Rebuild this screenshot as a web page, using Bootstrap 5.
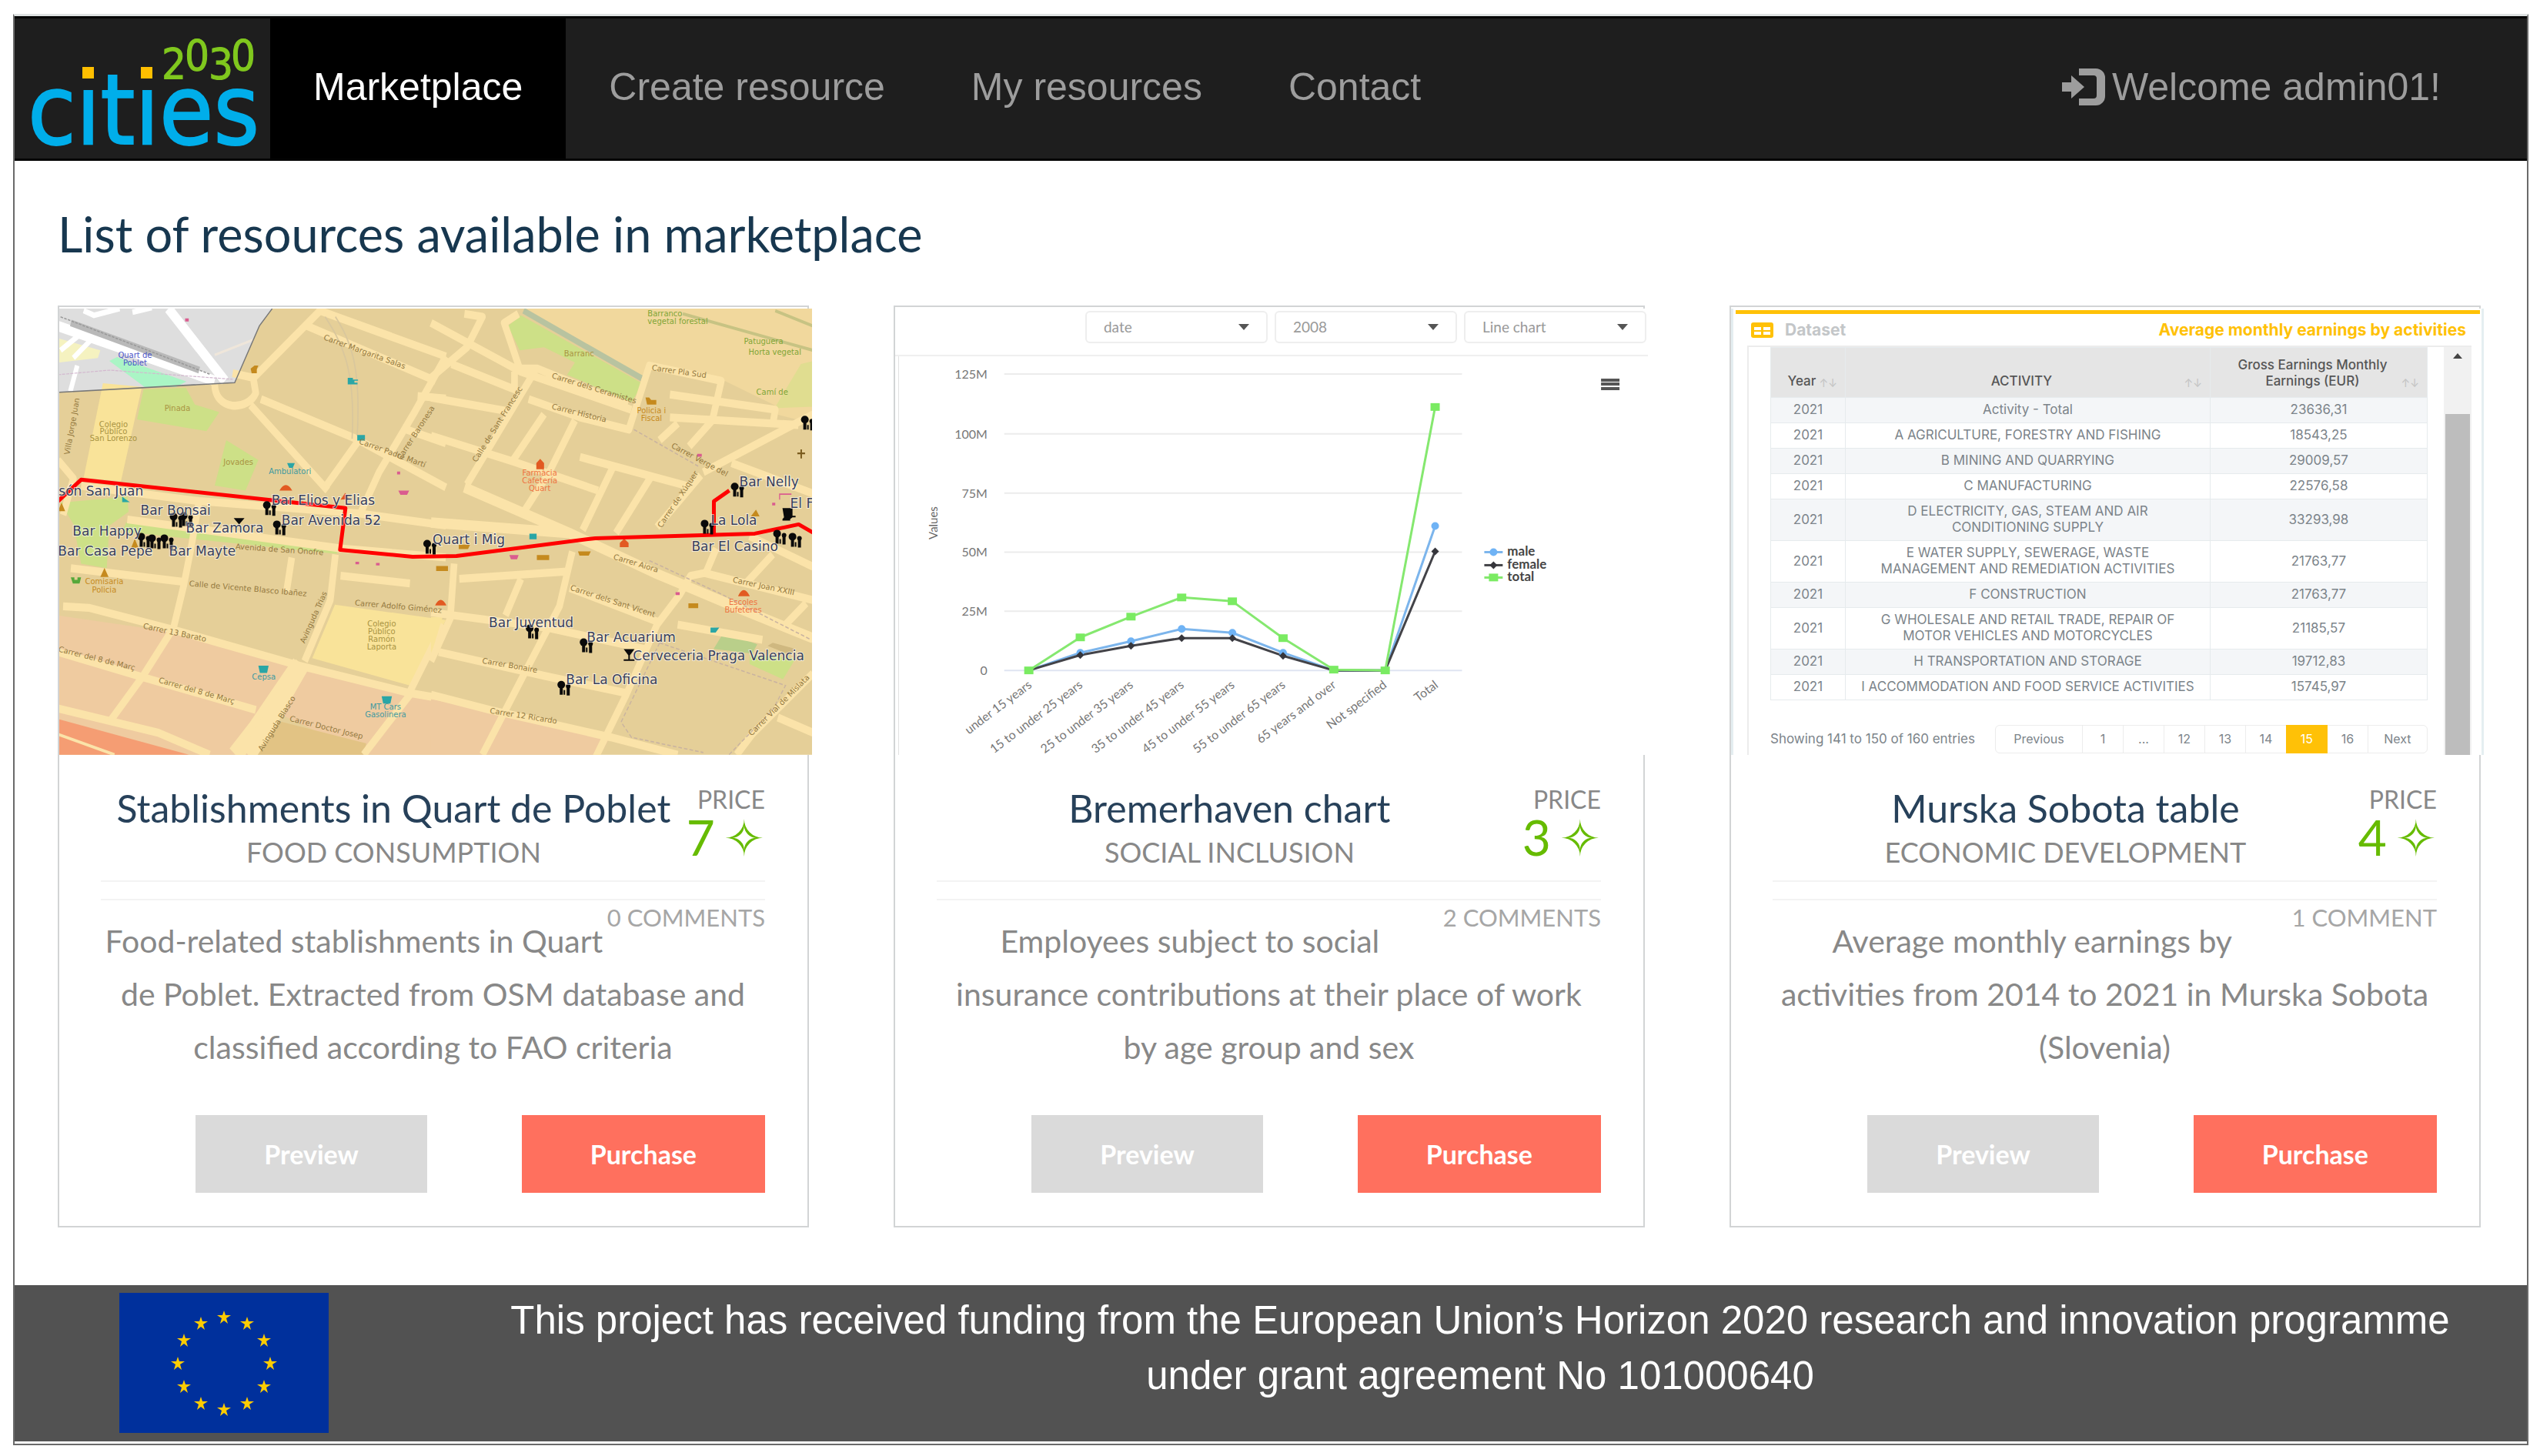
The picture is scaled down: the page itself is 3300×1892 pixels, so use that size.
<!DOCTYPE html>
<html lang="en">
<head>
<meta charset="utf-8">
<meta name="viewport" content="width=device-width, initial-scale=1">
<title>Cities2030 Marketplace</title>
<link href="https://cdn.jsdelivr.net/npm/bootstrap@5.3.0/dist/css/bootstrap.min.css" rel="stylesheet">
<style>
body{background:#fff;font-family:Lato,"Open Sans",sans-serif}
.frame{margin:18px 15px 14px 17px;border:2px solid #6a6a6a;border-top:3px solid #dfe3e3;padding-bottom:3px}
/* top bar */
.topbar{background:#1e1e1e;border:solid #050505;border-width:3px 0;padding:0;font-family:"Liberation Sans",Arial,sans-serif;font-size:50px;line-height:72px}
.topbar .navbar-nav .nav-link{color:#9d9d9d;padding:53px 56px 57px}
.topbar .navbar-nav .nav-link.active{background:#000;color:#fff}
.topbar .navbar-brand{padding:0;margin:0 18px 0 20px;font-size:50px}
.topbar .navbar-brand svg{width:294px;height:176px;display:block}
.welcome{padding:53px 112px 57px 0;color:#9d9d9d;text-decoration:none;gap:9px}
.welcome svg{width:56px;height:48px}
/* list */
.content{padding:57px 60px 75px 56px}
.content h1{font-size:63px;line-height:76px;color:#17374f;margin-bottom:55px;font-weight:400}
.cardgrid{--bs-gutter-x:110px;--bs-gutter-y:56px}
.resource{border:2px solid #d2d4d5;border-radius:0;padding-top:2px}
.thumb{width:calc(100% + 6px);aspect-ratio:980/581;overflow:hidden;background:#fff}
.thumb>svg,.chartpane svg{display:block;width:100%}
.thumb>svg{height:100%}
.resource .card-body{padding:39px 55px 43px 54px;color:#888}
.resource h2{font-size:50px;line-height:60px;color:#27415a;font-weight:400;margin-bottom:5px}
.topic{font-size:36px;line-height:45px}
.pricetag{font-size:32px;line-height:38px}
.amount{font-size:64px;line-height:60px;color:#66bb00;white-space:nowrap;gap:11px}
.rules{margin-top:14px;height:26px;border:solid #f3f3f3;border-width:2px 0}
.about{padding-top:4px}
.comments{float:right;font-size:31px;line-height:37px;color:#a6a6a6}
.about p{font-size:41px;line-height:69px;padding-top:14px;margin-bottom:54px}
.actions{gap:123px}
.actions .btn{border:0;border-radius:0;color:#fff;font-size:34px;line-height:41px;font-weight:700;padding:30px 89px}
.btn-look{background:#dadada}
.btn-buy{background:#ff705e}
/* chart card */
.filters{height:62px;padding:3px 2px 0 0;gap:9px;border-bottom:2px solid #efefef}
.filters select{width:237px;height:42px;padding:0 22px;border:2px solid #eee;border-radius:6px;color:#999;font-size:19px;background:#fff url("data:image/svg+xml,%3Csvg xmlns='http://www.w3.org/2000/svg' viewBox='0 0 14 8'%3E%3Cpath d='M0 0h14L7 8z' fill='%23555'/%3E%3C/svg%3E") no-repeat right 22px center/14px 8px}
.chartpane{margin-left:4px;border-left:1px solid #e2e2e2}
/* table card */
.datathumb{font-family:Inter,"Open Sans",sans-serif;padding:2px 2px 0 3px;border:solid #e4eef1;border-width:0 3px}
.datahead{border-top:5px solid #ffc107;height:46px;padding:0 18px 0 20px;font-weight:700;font-size:21px}
.datahead svg{width:29px;height:20px;margin-right:15px}
.dataname{color:#c3c6c8}
.datatitle{color:#ffc107}
.datapane{margin:0 11px 0 15px;border:solid #ececec;border-width:2px 0 0 2px}
.datainner{padding:0 21px 0 28px}
.datatable{margin:0 0 32px;font-size:17px;line-height:21px;text-align:center}
.datatable td,.datatable th{padding:5px 4px 6px;border:1px solid #e6ebed;vertical-align:middle;color:#7c848a;background:#fff;white-space:nowrap}
.datatable tr:nth-child(odd) td{background:#f4f6f8}
.datatable thead th{background:#e5e5e5;color:#555;font-weight:500;height:65px;vertical-align:bottom;padding:0 24px 10px 8px;position:relative}
.datatable th:first-child{width:97px}
.datatable th:last-child{width:282px}
.sorter{position:absolute;right:10px;bottom:8px;color:#c3c3c3;font-weight:400;font-size:14px}
.datafoot{font-size:17px;color:#7c848a;white-space:nowrap}
.datafoot .page-link{color:#7c848a;border-color:#ececec;border-radius:0;padding:6px 0;line-height:23px;font-size:16px;text-align:center;min-width:54px}
.datafoot .page-item.active .page-link{background:#ffc107;border-color:#ffc107;color:#fff}
.datafoot .page-item.wide .page-link{min-width:78px}
.datafoot .page-item.wider .page-link{min-width:114px}
.rail{width:36px;background:#f1f1f1;padding:8px 2px 0}
.rail svg{width:12px;height:7px;margin:0 auto 72px;display:block}
.rail div{flex:1;background:#bdbdbd}
/* footer */
.funding{background:#525252;color:#fff;font-family:"Liberation Sans",Arial,sans-serif;font-size:51px;line-height:72px;padding:10px 0 11px}
.funding svg{width:272px;height:182px}
</style>
</head>
<body>
<div class="frame">
<nav class="navbar navbar-expand topbar">
  <a class="navbar-brand" href="#" aria-label="Cities 2030">
    <svg viewBox="39 27 294 176" font-family="'DejaVu Sans Condensed','DejaVu Sans',sans-serif">
      <text x="36" y="187" font-size="127" fill="#00aeea" stroke="#00aeea" stroke-width="2">cities</text>
      <path d="M103 80h23v29h-23zM180 80h22v29h-22z" fill="#1e1e1e"/>
      <path d="M107 87h15v15h-15zM183 87h15v15h-15z" fill="#ffbf00"/>
      <text font-size="56" fill="#80c81e" stroke="#80c81e" stroke-width="1"><tspan x="210" y="102">2</tspan><tspan x="240" y="91">0</tspan><tspan x="271" y="102">3</tspan><tspan x="300" y="91">0</tspan></text>
    </svg>
  </a>
  <ul class="navbar-nav me-auto">
    <li class="nav-item"><a class="nav-link active" href="#">Marketplace</a></li>
    <li class="nav-item"><a class="nav-link" href="#">Create resource</a></li>
    <li class="nav-item"><a class="nav-link" href="#">My resources</a></li>
    <li class="nav-item"><a class="nav-link" href="#">Contact</a></li>
  </ul>
  <a class="welcome d-flex align-items-center" href="#">
    <svg viewBox="0 0 56 48" fill="#9d9d9d" aria-hidden="true"><path d="M0 18h12V9l17 15-17 15v-9H0zM22 0h22a12 12 0 0 1 12 12v24a12 12 0 0 1-12 12H22v-9h19a4 4 0 0 0 4-4V13a4 4 0 0 0-4-4H22z"/></svg>
    <span>Welcome admin01!</span>
  </a>
</nav>

<main class="content">
<h1>List of resources available in marketplace</h1>
<div class="row row-cols-3 cardgrid">

<div class="col"><article class="card resource">
  <div class="thumb">
  <svg viewBox="0 0 980 579" preserveAspectRatio="xMidYMid slice" role="img" aria-label="Street map of Quart de Poblet">
    <rect width="980" height="579" fill="#e5cf98"/>
    <g transform="scale(.3333 .3954) translate(-50 -53)">
      <path d="M50 53H884L834 110 738 296 50 328z" fill="#dedede"/>
      <path d="M250 225l30-13 270 80-40 18-120 2z" fill="#aaf5c5"/>
      <path d="M50 150l165 40-10 25-155 15z" fill="#f5f2c0"/>
      <g stroke="#fff" fill="none" stroke-width="18"><path d="M50 110L660 290M480 53L700 290" stroke-width="34"/><path d="M125 240L98 325M340 65l75-15M150 60l40 15 100-22M60 190l80-55M110 215l75-65"/><path d="M660 205l150-50" stroke="#efe6da" stroke-width="8"/></g>
      <path d="M100 100L600 255" stroke="#b9b9b9" stroke-width="22"/><path d="M60 80L640 268" stroke="#999" stroke-width="4" stroke-dasharray="10 5"/>
      <path d="M50 270l200-15 480 30" stroke="#d3b8cf" fill="none" stroke-width="3" stroke-dasharray="12 4"/>
      <path d="M225 298l152 12-82 310-145-12z" fill="#f9e399"/>
      <path d="M383 318l165-5 35 55 95 25-50 62-270-38z" fill="#cde087"/>
      <path d="M705 485l125 65-50 100-120-16z" fill="#cde087"/>
      <path d="M60 690l260-20 5 50-75 45-10 140-100-15-30-130z" fill="#cde087"/>
      <path d="M315 755l830 75-10 28L300 785z" fill="#cde087"/>
      <path d="M50 1060L500 1115 950 1215 790 1517H50z" fill="#efcba0"/><path d="M1000 1240L1560 1340V1517H1250L930 1390z" fill="#efcba0"/>
      <path d="M900 1405L1250 1480 1240 1517H800z" fill="#e2c384"/>
      <path d="M1128 1025L1560 1075 1420 1290 1040 1200z" fill="#f9e399"/>
      <path d="M50 1400L560 1517H50z" fill="#f59d73"/><path d="M50 1450L270 1517" stroke="#fbe3a9" stroke-width="10"/>
      <g stroke="#fbe3a9" fill="none" stroke-width="26" stroke-linejoin="round">
        <path d="M50 1365L440 1445 640 1517M70 1030l100 5 320 70 500 120M990 1225l430 90 140 20" />
        <path d="M660 300c0 90 130 90 160 30l-10-50-80-15M800 370l300 280M800 290L1070 60l490 150M1020 110l500 180M840 350l370 130 350 160" />
        <path d="M1225 480L1090 640M1560 210L1440 390 1300 590 1230 720M1450 340l110 8M1390 445l170 50"/>
        <path d="M600 680L570 830 540 960 500 1100 380 1260 250 1410M140 635l460 50 620 40 340 40M100 905l440 45M960 870l-20 110M1150 930l270 25"/>
        <path d="M320 745L1150 840 1560 870M1130 860L1110 1010 1010 1210"/>
        <path d="M50 1180l320 80 450 110M50 550l60 60-40 120"/>
        <path d="M1420 1320L1240 1517M1550 1090L1420 1310"/>
        <path d="M990 1220L820 1430 740 1517" stroke-width="60"/>
        <path d="M1000 1220L850 1440 790 1517" stroke-width="60"/>
      </g>
      <path d="M1090 80c60 80 120 160 105 400M1130 80c60 80 100 160 85 390" stroke="#d9c79d" fill="none" stroke-width="5"/>
      <path d="M884 53L834 110 738 296 50 328" fill="none" stroke="#777" stroke-width="4"/>
      <g fill="#e25a22"><path d="M912 650q25-36 50 0zM1518 1027q22-36 44 0zM1150 680l18-22 15 20z"/></g>
      <g fill="#2aa6a6"><path d="M1178 280h20v6h20v4h-14v6h12v6h-38zM1215 468h30v18h-30zM830 1225h40l-6 24h-28zM1310 1325h40l-6 24h-28zM942 560h30l-8 16h-14zM300 670l12 8 18 10h-30z"/></g>
      <g fill="#c58a1e"><path d="M800 250l15-10h15l-6 12v13h-20zM50 718l14-28 14 28zM215 934l16-30 16 30zM335 838l14-30 14 30z"/></g>
      <g fill="#da5c8f"><path d="M545 85h14v10h-14zM1370 588h12v9h-12zM1375 650h42l-8 14h-26zM1208 884h14v8h-14zM1288 888h14v8h-14z"/></g>
      <path d="M100 935h14v8h12v-8h14l-6 20h-26z" fill="#55a83a"/>
    </g>
    <g transform="translate(484 0) scale(.3333 .3954) translate(0 -53)">
      <path d="M370 53H1487V430L820 290z" fill="#f1d89d"/>
      <path d="M350 75L825 300 780 360 530 270 560 230 440 180 345 190 300 110z" fill="#cde087"/>
      <path d="M360 60L820 282" stroke="#b8c3a0" stroke-width="20"/>
      <path d="M1440 235l47-10v150l-150 5z" fill="#e0dd90"/><path d="M980 70l507 120M1340 60l147 50" stroke="#c7c383" stroke-width="10"/>
      <path d="M850 235l280 50 220 90v80H820z" fill="#e5cf98"/>
      <path d="M1140 1115l130 40-20 30-150-15z" fill="#b9cf8a"/><path d="M1240 1190l180 10-50 70-130-50z" fill="#cde087"/>
      <path d="M0 1335L440 1410 690 1470 660 1517H0z" fill="#efcba0"/><path d="M0 1065h45L0 1190z" fill="#f9e399"/>
      <path d="M1330 1150l90 20-20 20-90-30z" fill="#cfb880"/>
      <g stroke="#fbe3a9" fill="none" stroke-width="26" stroke-linejoin="round">
        <path d="M0 100L350 260 780 385 M130 70l70 10-60 100L0 280M340 70l-55 30 60 150 70 0 350 120M80 235L330 320M325 260v60M410 250L140 630"/>
        <path d="M0 345L300 390M0 470L320 555 650 650M440 400L320 550M560 420L460 590 365 715M380 350L580 410 770 450 850 240 1130 290 1095 420 1005 505M930 335l410 50-10 50M930 410l500 25M960 430l-70 55"/>
        <path d="M580 540L1020 640M710 570L590 780M860 600L720 790M1050 600L880 770M1060 590L1487 400"/>
        <path d="M130 640L540 790 870 920 1180 1030 1487 1135M0 755L540 790" stroke-width="34"/>
        <path d="M550 850L500 1030 370 1240 200 1517M110 940l430-25M90 890l-15 180L0 1210M350 940l-60 120M540 970L880 1080M1110 840l-40 80-60 10-40 60-90 100-120 230-120 207"/>
        <path d="M0 1050L450 1100 830 1170M30 1180L450 1260 760 1315M0 1320L230 1370 700 1460 960 1517M1060 920L1487 1010M1330 860L1220 960M1240 800l247 100M1460 1020l-80 70M960 1090l330 50M1487 1250L1250 1450 1190 1517M1350 1395l137 50"/>
        <path d="M1170 560l317 100"/>
      </g>
      <path d="M890 1150L1380 1290 1330 1370 1160 1517M890 1150L740 1410 780 1460 1060 1510M790 450l250 120M850 880l280 110 350 150" fill="none" stroke="#c9b3a0" stroke-width="4" stroke-dasharray="14 8"/>
      <g fill="#e25a22"><path d="M410 580v-20l15-14 15 14v20zM735 836v-14l17-14 17 14v14zM1195 997q22-40 46 0z"/></g>
      <g fill="#2aa6a6"><path d="M383 792h28v18h-28zM1088 1100h34l-14 16h-20z"/></g>
      <g fill="#c58a1e"><path d="M835 345h14l8 8h20v15h-36zM20 898h46v16H20zM412 862h48v16h-48zM572 850h50l-8 14h-36zM1002 1020h38v16h-38zM108 828h44l-8 14h-36zM1245 735l20-22 14 22z"/></g>
      <g fill="#da5c8f"><path d="M305 862h36l-6 14h-24zM1036 530h18v9h-18zM952 984h16v9h-16zM1355 660h48v4h-44v16h-4zM1328 690h12v9h-12z"/></g>
      <path d="M1438 515h6v10h12v6h-12v14h-6v-14h-12v-6h12z" fill="#7a5c1e"/>
    </g>
    <g font-family="'DejaVu Sans',sans-serif" font-size="10" fill="#94793f">
      <text transform="translate(344 40) rotate(20)">Carrer Margarita Salas</text>
      <text transform="translate(390 175) rotate(20)">Carrer Padre Martí</text>
      <text transform="translate(170 360) rotate(5)">Calle de Vicente Blasco Ibañez</text>
      <text transform="translate(110 415) rotate(12)">Carrer 13 Barato</text>
      <text transform="translate(130 485) rotate(16)">Carrer del 8 de Març</text>
      <text transform="translate(0 445) rotate(14)">Carrer del 8 de Març</text>
      <text transform="translate(300 535) rotate(14)">Carrer Doctor Josep</text>
      <text transform="translate(230 312) rotate(4)">Avenida de San Onofre</text>
      <text transform="translate(385 385) rotate(5)">Carrer Adolfo Giménez</text>
      <text transform="translate(445 197) rotate(-57)">Carrer Baronesa</text>
      <text transform="translate(640 90) rotate(17)">Carrer dels Ceramistes</text>
      <text transform="translate(770 80) rotate(8)">Carrer Pla Sud</text>
      <text transform="translate(640 130) rotate(14)">Carrer Historia</text>
      <text transform="translate(795 180) rotate(28)">Carrer Verge del</text>
      <text transform="translate(720 325) rotate(17)">Carrer Aiora</text>
      <text transform="translate(664 365) rotate(18)">Carrer dels Sant Vicent</text>
      <text transform="translate(550 460) rotate(10)">Carrer Bonaire</text>
      <text transform="translate(560 525) rotate(9)">Carrer 12 Ricardo</text>
      <text transform="translate(543 200) rotate(-58)">Calle de Sant Francesc</text>
      <text transform="translate(783 285) rotate(-56)">Carrer de Xúquer</text>
      <text transform="translate(320 435) rotate(-66)">Avinguda Trias</text>
      <text transform="translate(265 575) rotate(-58)">Avinguda Blasco</text>
      <text transform="translate(900 555) rotate(-45)">Carrer Vial de Mislata</text>
      <text transform="translate(15 190) rotate(-80)">Villa Jorge Juan</text>
      <text transform="translate(875 355) rotate(12)">Carrer Joan XXIII</text>
      <g fill="#a99442" text-anchor="middle"><text x="72" y="154">Colegio</text><text x="72" y="163">Público</text><text x="72" y="172">San Lorenzo</text><text x="420" y="412">Colegio</text><text x="420" y="422">Público</text><text x="420" y="432">Ramón</text><text x="420" y="442">Laporta</text><text x="155" y="133">Pinada</text><text x="234" y="203">Jovades</text><text x="676" y="62">Barranc</text></g>
      <g fill="#7fa536"><text x="765" y="10">Barranco</text><text x="765" y="20">vegetal  forestal</text><text x="890" y="46">Patuguera</text><text x="896" y="60">Horta vegetal</text><text x="906" y="112">Camí de</text></g>
      <g fill="#4c55c8" text-anchor="middle"><text x="100" y="64">Quart de</text><text x="100" y="74">Poblet</text></g>
      <g fill="#ee7442" text-anchor="middle"><text x="625" y="217">Farmàcia</text><text x="625" y="227">Cafetería</text><text x="625" y="237">Quart</text><text x="889" y="384">Escoles</text><text x="889" y="394">Bufeteres</text></g>
      <g fill="#3f9aa0" text-anchor="middle"><text x="301" y="215">Ambulatori</text><text x="267" y="481">Cepsa</text><text x="425" y="520">MT Cars</text><text x="425" y="530">Gasolinera</text></g>
      <g fill="#c58a1e" text-anchor="middle"><text x="60" y="358">Comisaria</text><text x="60" y="368">Policia</text><text x="770" y="136">Policia i</text><text x="770" y="146">Fiscal</text></g>
    </g>
    <path d="M0 250L30 222 373 259 366 313 460 322 517 321 697 298 904 292 961 280 980 291M851 294V250L871 236" fill="none" stroke="#f00" stroke-width="5" stroke-linejoin="round"/>
    <defs><g id="diner"><circle cx="-4" cy="-5" r="5"/><circle cx="5" cy="-3" r="3"/><path d="M-6-3h4V8h-4zM3-3h4V9H3zM-1 2h2v6h-2z"/></g></defs>
    <g fill="#0a0a0a"><use href="#diner" x="275" y="260"/><use href="#diner" x="288" y="285"/><use href="#diner" x="154" y="275"/><use href="#diner" x="167" y="274"/><use href="#diner" x="112" y="301"/><use href="#diner" x="126" y="303"/><use href="#diner" x="142" y="303"/><use href="#diner" x="483" y="310"/><use href="#diner" x="882" y="236"/><use href="#diner" x="843" y="284"/><use href="#diner" x="937" y="297"/><use href="#diner" x="957" y="301"/><use href="#diner" x="616" y="420"/><use href="#diner" x="686" y="438"/><use href="#diner" x="657" y="493"/><use href="#diner" x="973" y="149"/><path d="M228 272h14l-7 8zM734 442h14l-6 8v5h6v2h-14v-2h6v-5zM940 259h13v10h4v2h-4l-3 2v2h-10v-2l2-2z"/></g>
    <g font-family="'DejaVu Sans',sans-serif" font-size="17" fill="#39405a" stroke="#fff" stroke-width="2" stroke-opacity=".6" paint-order="stroke">
      <text x="1" y="243">són San Juan</text><text x="107" y="268">Bar Bonsai</text><text x="166" y="291">Bar Zamora</text><text x="19" y="295">Bar Happy</text><text x="0" y="321">Bar Casa Pepe</text><text x="144" y="321">Bar Mayte</text><text x="277" y="255">Bar Elios y Elias</text><text x="290" y="281">Bar Avenida 52</text><text x="486" y="306">Quart i Mig</text><text x="884" y="231">Bar Nelly</text><text x="950" y="259">El F</text><text x="847" y="281">La Lola</text><text x="822" y="315">Bar El Casino</text><text x="559" y="413">Bar Juventud</text><text x="686" y="432">Bar Acuarium</text><text x="746" y="456">Cerveceria Praga Valencia</text><text x="659" y="487">Bar La Oficina</text>
    </g>
  </svg>
  </div>
  <div class="card-body">
    <div class="d-flex">
      <div class="flex-grow-1 text-center"><h2>Stablishments in Quart de Poblet</h2><div class="topic">FOOD CONSUMPTION</div></div>
      <div class="text-end"><div class="pricetag">PRICE</div><div class="amount d-flex justify-content-end"><span>7</span><span>✧</span></div></div>
    </div>
    <div class="rules"></div>
    <div class="about text-center"><span class="comments">0 COMMENTS</span><p>Food-related stablishments in Quart de Poblet. Extracted from OSM database and classified according to FAO criteria</p></div>
    <div class="actions d-flex justify-content-end"><button class="btn btn-look" type="button">Preview</button><button class="btn btn-buy" type="button">Purchase</button></div>
  </div>
</article></div>

<div class="col"><article class="card resource">
  <div class="thumb">
    <div class="filters d-flex justify-content-end">
      <select aria-label="Dimension" class="form-select"><option>date</option></select>
      <select aria-label="Year" class="form-select"><option>2008</option></select>
      <select aria-label="Chart type" class="form-select"><option>Line chart</option></select>
    </div>
    <div class="chartpane">
    <svg viewBox="5 62 975 519" role="img" aria-label="Employees by age group and sex" font-family="Lato,sans-serif">
      <path d="M142 85H738M142 163H738M142 240H738M142 317H738M142 394H738" stroke="#ececec" stroke-width="2"/>
      <path d="M142 471H738" stroke="#dfe5f2" stroke-width="2"/>
      <g font-size="16" fill="#777" text-anchor="end"><text x="120" y="91">125M</text><text x="120" y="169">100M</text><text x="120" y="246">75M</text><text x="120" y="323">50M</text><text x="120" y="400">25M</text><text x="120" y="477">0</text>
      <text transform="translate(179 492) rotate(-37)">under 15 years</text><text transform="translate(245 492) rotate(-37)">15 to under 25 years</text><text transform="translate(311 492) rotate(-37)">25 to under 35 years</text><text transform="translate(377 492) rotate(-37)">35 to under 45 years</text><text transform="translate(443 492) rotate(-37)">45 to under 55 years</text><text transform="translate(509 492) rotate(-37)">55 to under 65 years</text><text transform="translate(575 492) rotate(-37)">65 years and over</text><text transform="translate(641 492) rotate(-37)">Not specified</text><text transform="translate(708 492) rotate(-37)">Total</text></g>
      <text transform="translate(55 279) rotate(-90)" font-size="15" fill="#666" text-anchor="middle">Values</text>
      <g fill="none" stroke-width="3" stroke-linejoin="round"><path d="M174 471L241 448 307 433 373 417 439 422 505 448 571 471 638 471 703 283" stroke="#7cb5ec"/><path d="M174 471L241 451 307 439 373 429 439 429 505 452 571 471 638 471 703 316" stroke="#434348"/><path d="M174 471L241 428 307 401 373 376 439 381 505 429 571 470 638 471 703 128M767 350h24" stroke="#85e86f"/><path d="M767 317h24" stroke="#7cb5ec"/><path d="M767 334h24" stroke="#434348"/></g>
      <g fill="#6fb3f5"><circle cx="241" cy="448" r="5"/><circle cx="307" cy="433" r="5"/><circle cx="373" cy="417" r="5"/><circle cx="439" cy="422" r="5"/><circle cx="505" cy="448" r="5"/><circle cx="703" cy="283" r="5"/><circle cx="779" cy="317" r="5"/></g>
      <defs><path id="dia" d="M0-5L5 0 0 5-5 0z"/><path id="sq" d="M-6-5H6V5H-6z"/></defs>
      <g fill="#36363c"><use href="#dia" x="241" y="451"/><use href="#dia" x="307" y="439"/><use href="#dia" x="373" y="429"/><use href="#dia" x="439" y="429"/><use href="#dia" x="505" y="452"/><use href="#dia" x="703" y="316"/><use href="#dia" x="779" y="334"/></g>
      <g fill="#7aeb62"><use href="#sq" x="174" y="471"/><use href="#sq" x="241" y="428"/><use href="#sq" x="307" y="401"/><use href="#sq" x="373" y="376"/><use href="#sq" x="439" y="381"/><use href="#sq" x="505" y="429"/><use href="#sq" x="571" y="470"/><use href="#sq" x="638" y="471"/><use href="#sq" x="703" y="128"/><use href="#sq" x="779" y="350"/></g>
      <g font-size="17" font-weight="700" fill="#444"><text x="797" y="322">male</text><text x="797" y="339">female</text><text x="797" y="355">total</text></g>
      <path d="M919 93h24M919 98h24M919 104h24" stroke="#555" stroke-width="4"/>
    </svg>
    </div>
  </div>
  <div class="card-body">
    <div class="d-flex">
      <div class="flex-grow-1 text-center"><h2>Bremerhaven chart</h2><div class="topic">SOCIAL INCLUSION</div></div>
      <div class="text-end"><div class="pricetag">PRICE</div><div class="amount d-flex justify-content-end"><span>3</span><span>✧</span></div></div>
    </div>
    <div class="rules"></div>
    <div class="about text-center"><span class="comments">2 COMMENTS</span><p>Employees subject to social insurance contributions at their place of work by age group and sex</p></div>
    <div class="actions d-flex justify-content-end"><button class="btn btn-look" type="button">Preview</button><button class="btn btn-buy" type="button">Purchase</button></div>
  </div>
</article></div>

<div class="col"><article class="card resource">
  <div class="thumb datathumb d-flex flex-column">
    <div class="datahead d-flex align-items-center">
      <svg viewBox="0 0 29 20" aria-hidden="true"><rect width="29" height="20" rx="3" fill="#ffc107"/><path d="M4 6h9v4H4zM16 6h9v4h-9zM4 12h9v4H4zM16 12h9v4h-9z" fill="#fff"/></svg>
      <span class="dataname me-auto">Dataset</span><span class="datatitle">Average monthly earnings by activities</span>
    </div>
    <div class="datapane d-flex flex-grow-1">
      <div class="datainner flex-grow-1">
        <table class="table datatable">
          <thead><tr><th>Year<span class="sorter">↑↓</span></th><th>ACTIVITY<span class="sorter">↑↓</span></th><th>Gross Earnings Monthly<br>Earnings (EUR)<span class="sorter">↑↓</span></th></tr></thead>
          <tbody>
          <tr><td>2021</td><td>Activity - Total</td><td>23636,31</td></tr>
          <tr><td>2021</td><td>A AGRICULTURE, FORESTRY AND FISHING</td><td>18543,25</td></tr>
          <tr><td>2021</td><td>B MINING AND QUARRYING</td><td>29009,57</td></tr>
          <tr><td>2021</td><td>C MANUFACTURING</td><td>22576,58</td></tr>
          <tr><td>2021</td><td>D ELECTRICITY, GAS, STEAM AND AIR<br>CONDITIONING SUPPLY</td><td>33293,98</td></tr>
          <tr><td>2021</td><td>E WATER SUPPLY, SEWERAGE, WASTE<br>MANAGEMENT AND REMEDIATION ACTIVITIES</td><td>21763,77</td></tr>
          <tr><td>2021</td><td>F CONSTRUCTION</td><td>21763,77</td></tr>
          <tr><td>2021</td><td>G WHOLESALE AND RETAIL TRADE, REPAIR OF<br>MOTOR VEHICLES AND MOTORCYCLES</td><td>21185,57</td></tr>
          <tr><td>2021</td><td>H TRANSPORTATION AND STORAGE</td><td>19712,83</td></tr>
          <tr><td>2021</td><td>I ACCOMMODATION AND FOOD SERVICE ACTIVITIES</td><td>15745,97</td></tr>
          </tbody>
        </table>
        <div class="datafoot d-flex justify-content-between align-items-center">
          <span>Showing 141 to 150 of 160 entries</span>
          <ul class="pagination mb-0">
            <li class="page-item wider"><a class="page-link" href="#">Previous</a></li><li class="page-item"><a class="page-link" href="#">1</a></li><li class="page-item"><a class="page-link" href="#">...</a></li><li class="page-item"><a class="page-link" href="#">12</a></li><li class="page-item"><a class="page-link" href="#">13</a></li><li class="page-item"><a class="page-link" href="#">14</a></li><li class="page-item active"><a class="page-link" href="#">15</a></li><li class="page-item"><a class="page-link" href="#">16</a></li><li class="page-item wide"><a class="page-link" href="#">Next</a></li>
          </ul>
        </div>
      </div>
      <div class="rail d-flex flex-column"><svg viewBox="0 0 12 7"><path d="M0 7L6 0l6 7z" fill="#444"/></svg><div></div></div>
    </div>
  </div>
  <div class="card-body">
    <div class="d-flex">
      <div class="flex-grow-1 text-center"><h2>Murska Sobota table</h2><div class="topic">ECONOMIC DEVELOPMENT</div></div>
      <div class="text-end"><div class="pricetag">PRICE</div><div class="amount d-flex justify-content-end"><span>4</span><span>✧</span></div></div>
    </div>
    <div class="rules"></div>
    <div class="about text-center"><span class="comments">1 COMMENT</span><p>Average monthly earnings by activities from 2014 to 2021 in Murska Sobota (Slovenia)</p></div>
    <div class="actions d-flex justify-content-end"><button class="btn btn-look" type="button">Preview</button><button class="btn btn-buy" type="button">Purchase</button></div>
  </div>
</article></div>

</div>
</main>

<footer class="funding">
  <div class="row g-0 text-center">
    <div class="col-2">
      <svg viewBox="0 0 272 182" role="img" aria-label="European Union flag"><rect width="272" height="182" fill="#00309c"/>
        <defs><path id="star" d="M0-9L2-3H9L3 1 5 8 0 4-5 8-3 1-9-3H-2z"/></defs>
        <g fill="#ffcc00"><use href="#star" x="136" y="32"/><use href="#star" x="166" y="40"/><use href="#star" x="188" y="62"/><use href="#star" x="196" y="92"/><use href="#star" x="188" y="122"/><use href="#star" x="166" y="144"/><use href="#star" x="136" y="152"/><use href="#star" x="106" y="144"/><use href="#star" x="84" y="122"/><use href="#star" x="76" y="92"/><use href="#star" x="84" y="62"/><use href="#star" x="106" y="40"/></g>
      </svg>
    </div>
    <div class="col-10">This project has received funding from the European Union’s Horizon 2020 research and innovation programme<br>under grant agreement No 101000640</div>
  </div>
</footer>
</div>
<script src="https://cdn.jsdelivr.net/npm/bootstrap@5.3.0/dist/js/bootstrap.bundle.min.js"></script>
</body>
</html>
